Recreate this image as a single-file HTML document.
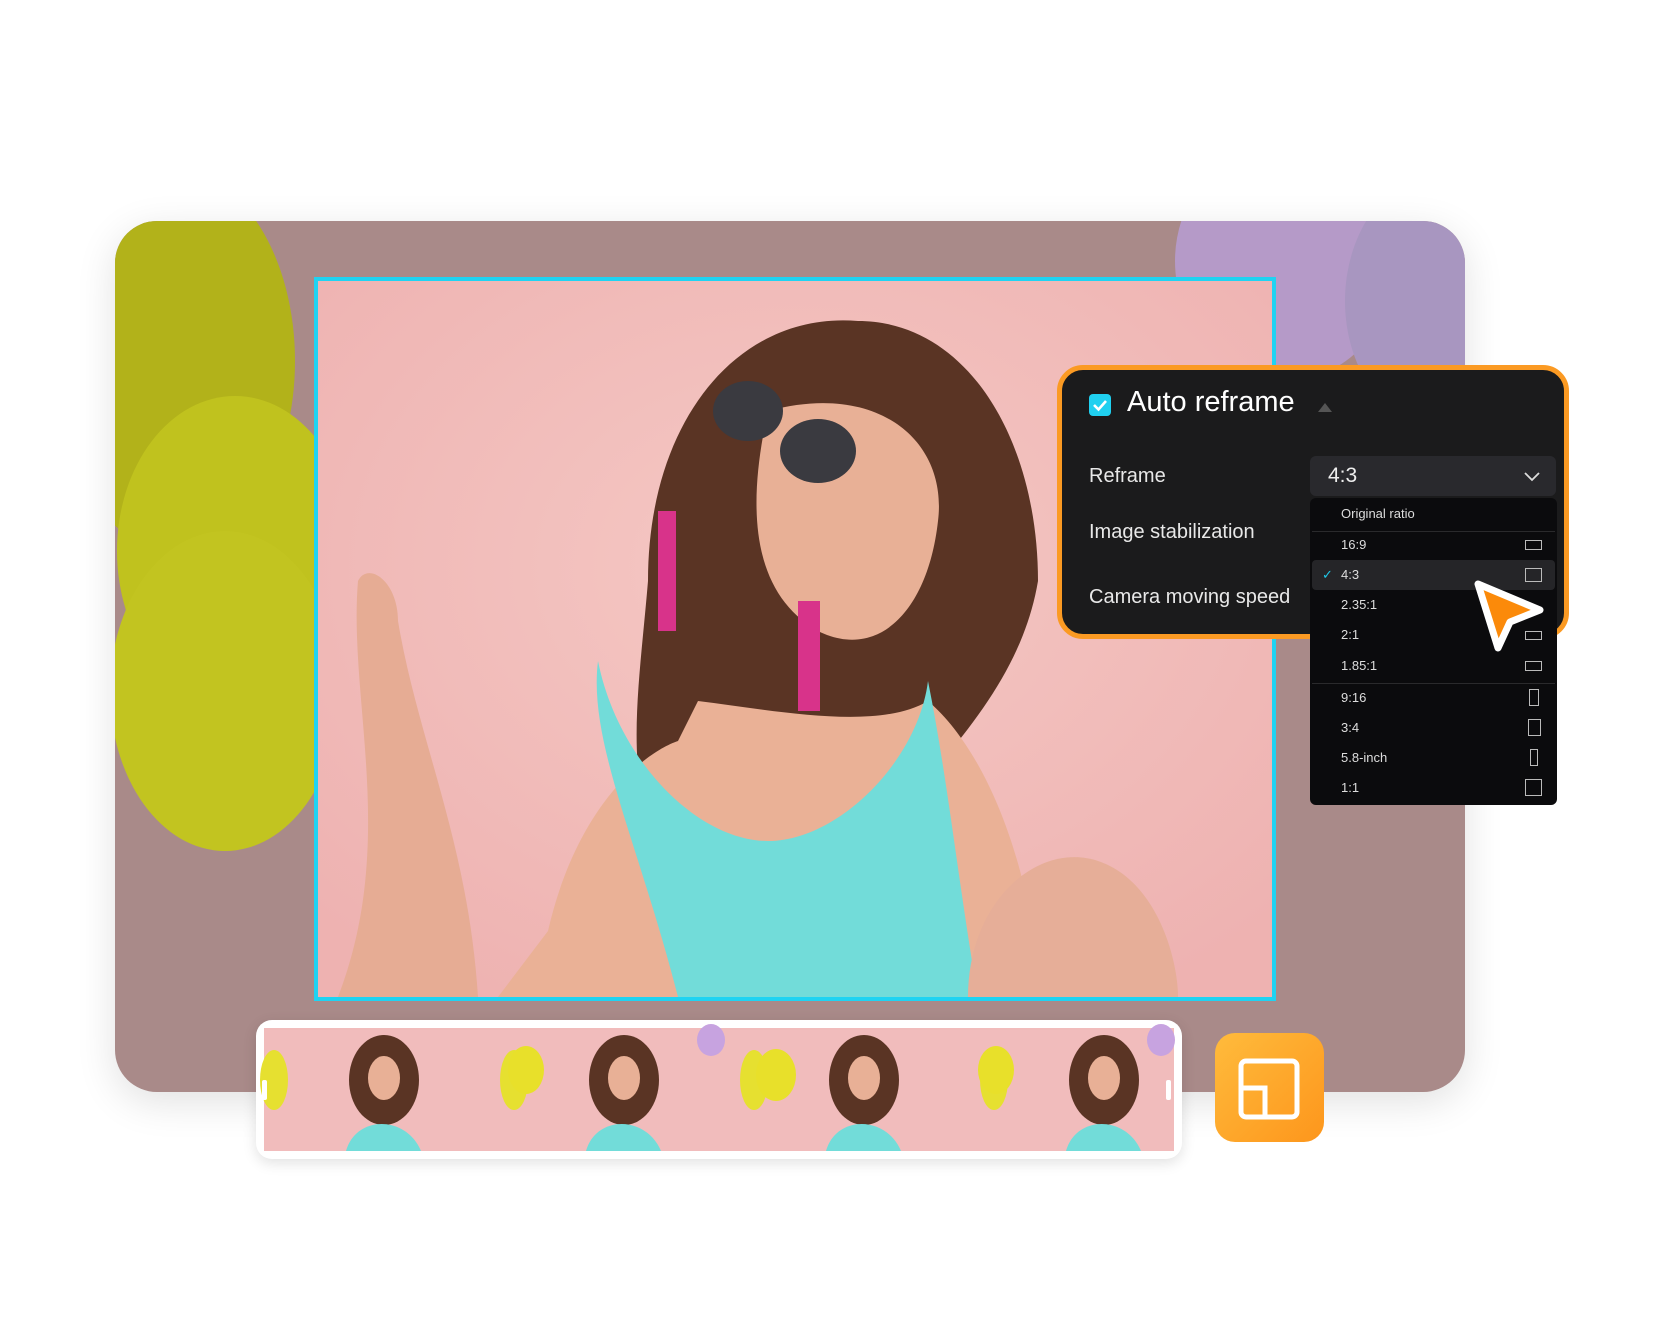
<!DOCTYPE html>
<html><head><meta charset="utf-8"><style>
*{margin:0;padding:0;box-sizing:border-box}
body{width:1680px;height:1344px;background:#fff;position:relative;overflow:hidden;font-family:"Liberation Sans",sans-serif}
.abs{position:absolute}
#card{left:115px;top:221px;width:1350px;height:871px;border-radius:42px;overflow:hidden;background:#a98a89;box-shadow:0 10px 40px rgba(0,0,0,.12)}
#frame{left:314px;top:277px;width:962px;height:724px;border:4px solid #1fd3f2;overflow:hidden;background:#f2bcbb}
#panel{left:1057px;top:365px;width:512px;height:274px;border-radius:26px;background:#1b1b1c;border:5px solid #fb9a23}
.lbl{color:#e8e8e8;font-size:20px;position:absolute;left:27px}
#dd{left:1310px;top:456px;width:246px;height:40px;background:#29292d;border-radius:6px;color:#eee;font-size:21px;padding:8px 18px}
#menu{left:1310px;top:498px;width:247px;height:307px;background:#0b0b0d;border-radius:6px}
.row{position:absolute;left:0;width:247px;height:30px;color:#ddd;font-size:13px;padding-left:31px;line-height:30px}
.ic{position:absolute;right:15px;border:1.5px solid #bbb}
#film{left:256px;top:1020px;width:926px;height:139px;border-radius:16px;background:#fff;box-shadow:0 4px 14px rgba(0,0,0,.12);overflow:hidden}
</style></head><body>
<div id="card" class="abs">
<svg width="1350" height="871" style="position:absolute;left:0;top:0">
<ellipse cx="60" cy="140" rx="120" ry="190" fill="#b2b21a"/>
<ellipse cx="120" cy="330" rx="118" ry="155" fill="#c0c21e"/>
<ellipse cx="110" cy="470" rx="115" ry="160" fill="#c2c420"/>
<ellipse cx="1170" cy="40" rx="110" ry="120" fill="#b59ac8"/>
<ellipse cx="1330" cy="80" rx="100" ry="130" fill="#a896c0"/>
</svg>
</div>
<div id="frame" class="abs">
<svg width="954" height="716" style="position:absolute;left:0;top:0">
<defs><radialGradient id="bg" cx="0.5" cy="0.4" r="0.7"><stop offset="0" stop-color="#f5c8c4"/><stop offset="1" stop-color="#eeb2b1"/></radialGradient></defs>
<rect width="954" height="716" fill="url(#bg)"/>
<path d="M540 40 C420 30 330 140 330 300 C320 420 300 520 360 600 L520 600 C600 500 700 420 720 300 C720 160 650 40 540 40Z" fill="#5a3424"/>
<path d="M450 130 C430 220 430 310 500 350 C560 380 610 330 620 240 C630 160 560 100 450 130Z" fill="#e8b096"/>
<path d="M230 650 C260 520 330 470 360 460 L380 420 C460 430 560 450 610 420 C680 480 720 620 720 716 L180 716Z" fill="#eab196"/>
<path d="M280 380 C270 460 320 560 360 716 L660 716 C640 600 630 500 610 400 C600 480 520 560 450 560 C380 560 300 480 280 380Z" fill="#72dcd9"/>
<path d="M20 716 C80 560 30 420 40 300 C50 280 80 300 80 340 C100 460 150 560 160 716Z" fill="#e6ac94"/>
<path d="M650 716 C650 620 720 560 780 580 C840 600 860 680 860 716Z" fill="#e6ae98"/>
<ellipse cx="430" cy="130" rx="35" ry="30" fill="#3a3a40"/>
<ellipse cx="500" cy="170" rx="38" ry="32" fill="#3a3a40"/>
<rect x="340" y="230" width="18" height="120" fill="#d8338a"/>
<rect x="480" y="320" width="22" height="110" fill="#d8338a"/>
</svg>
</div>
<div id="panel" class="abs">
<div class="abs" style="left:27px;top:24px;width:22px;height:22px;background:#20d0f0;border-radius:4px"><svg width="22" height="22"><path d="M5 11 L9.5 15.5 L17 7" stroke="#fff" stroke-width="2.6" fill="none"/></svg></div>
<div class="abs" style="left:65px;top:16px;color:#fff;font-size:29px">Auto reframe</div>
<div class="abs" style="left:256px;top:33px;width:0;height:0;border-left:7px solid transparent;border-right:7px solid transparent;border-bottom:9px solid #555"></div>
<div class="lbl" style="top:95px">Reframe</div>
<div class="lbl" style="top:151px">Image stabilization</div>
<div class="lbl" style="top:216px">Camera moving speed</div>
</div>
<div id="dd" class="abs">4:3<svg width="16" height="10" style="position:absolute;right:16px;top:16px"><path d="M1 1 L8 8 L15 1" stroke="#ddd" stroke-width="1.8" fill="none"/></svg></div>
<div id="menu" class="abs">
<div class="row" style="top:1px">Original ratio</div>
<div style="position:absolute;left:2px;right:2px;top:33px;border-top:1px solid #2a2a2c"></div>
<div class="row" style="top:32px">16:9<div class="ic" style="width:17px;height:10px;top:10px"></div></div>
<div class="row" style="top:62px;background:#252528;left:2px;width:243px;border-radius:4px;padding-left:29px"><span style="position:absolute;left:10px;color:#20c8e8">✓</span>4:3<div class="ic" style="width:17px;height:14px;top:8px;right:13px"></div></div>
<div class="row" style="top:92px">2.35:1</div>
<div class="row" style="top:122px">2:1<div class="ic" style="width:17px;height:9px;top:11px"></div></div>
<div class="row" style="top:153px">1.85:1<div class="ic" style="width:17px;height:10px;top:10px"></div></div>
<div style="position:absolute;left:2px;right:2px;top:185px;border-top:1px solid #2a2a2c"></div>
<div class="row" style="top:185px">9:16<div class="ic" style="width:10px;height:17px;top:6px;right:18px"></div></div>
<div class="row" style="top:215px">3:4<div class="ic" style="width:13px;height:17px;top:6px;right:16px"></div></div>
<div class="row" style="top:245px">5.8-inch<div class="ic" style="width:8px;height:17px;top:6px;right:19px"></div></div>
<div class="row" style="top:275px">1:1<div class="ic" style="width:17px;height:17px;top:6px"></div></div>
</div>
<svg class="abs" style="left:1470px;top:576px" width="80" height="80"><path d="M8 8 L70 34 L40 46 L28 72 Z" fill="#fb8a0a" stroke="#fff" stroke-width="7" stroke-linejoin="round"/></svg>
<div id="film" class="abs">
<svg width="926" height="139" style="position:absolute;left:0;top:0">
<rect x="8" y="8" width="910" height="123" fill="#f1bcbc"/>
<g id="t">
<ellipse cx="128" cy="60" rx="35" ry="45" fill="#5a3424"/>
<ellipse cx="128" cy="58" rx="16" ry="22" fill="#e8b096"/>
<path d="M90 131 C100 95 150 95 165 131Z" fill="#72dcd9"/>
<ellipse cx="18" cy="60" rx="14" ry="30" fill="#e6e030"/>
</g>
<use href="#t" x="240"/><use href="#t" x="480"/><use href="#t" x="720"/>
<ellipse cx="270" cy="50" rx="18" ry="24" fill="#e8e02a"/><ellipse cx="520" cy="55" rx="20" ry="26" fill="#e8e02a"/><ellipse cx="740" cy="50" rx="18" ry="24" fill="#e8e02a"/>
<ellipse cx="455" cy="20" rx="14" ry="16" fill="#c7a3e0"/><ellipse cx="905" cy="20" rx="14" ry="16" fill="#c7a3e0"/>
<rect x="6" y="60" width="5" height="20" rx="2" fill="#fff"/><rect x="910" y="60" width="5" height="20" rx="2" fill="#fff"/>
</svg>
</div>
<div class="abs" style="left:1215px;top:1033px;width:109px;height:109px;border-radius:20px;background:linear-gradient(135deg,#ffbb3c,#fd961c)">
<svg width="109" height="109"><rect x="26" y="28" width="56" height="56" rx="5" fill="none" stroke="#fff" stroke-width="5"/><path d="M26 55 H50 V84" fill="none" stroke="#fff" stroke-width="5"/></svg>
</div>
</body></html>
